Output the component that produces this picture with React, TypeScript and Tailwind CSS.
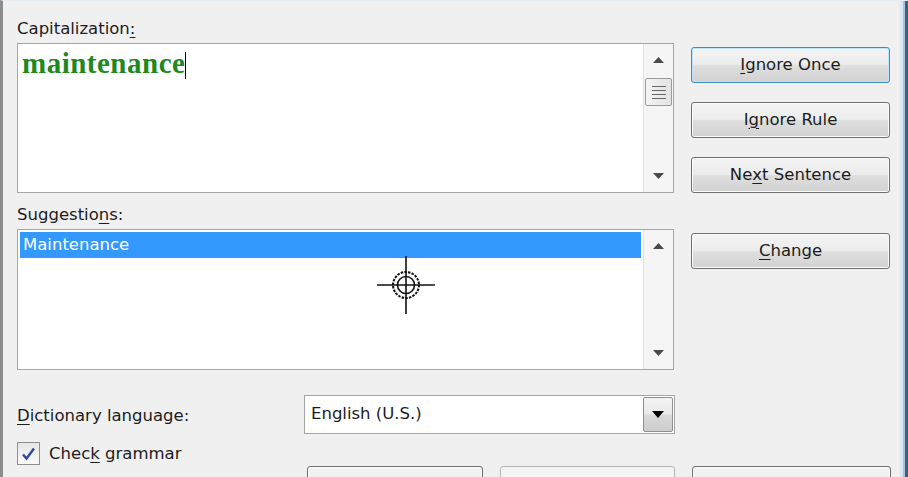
import React from 'react';

const ui = { fontFamily: '"DejaVu Sans", Tahoma, sans-serif' };

// access-key underline
const K: React.FC<{ children: React.ReactNode }> = ({ children }) => (
  <span className="underline underline-offset-[3px] decoration-1">{children}</span>
);

type BtnProps = {
  children?: React.ReactNode;
  className?: string;
  focused?: boolean;
  disabled?: boolean;
};

const VistaButton: React.FC<BtnProps> = ({ children, className = '', focused, disabled }) => (
  <div
    className={
      'relative flex items-center justify-center rounded-[3px] border text-[16.5px] ' +
      (focused
        ? 'border-[#3c8fc6] shadow-[inset_0_0_0_1px_#bfe3f7] '
        : disabled
          ? 'border-[#b5b5b5] '
          : 'border-[#707070] shadow-[inset_0_0_0_1px_#fbfbfb] ') +
      (disabled
        ? 'bg-[#f4f4f4] text-[#a0a0a0] '
        : 'bg-[linear-gradient(to_bottom,#f4f4f4_0%,#ececec_48%,#dedede_52%,#d2d2d2_100%)] text-[#1c1c1c] ') +
      className
    }
    style={ui}
  >
    {children}
  </div>
);

const ArrowUp = () => (
  <svg width="11" height="6" viewBox="0 0 11 6">
    <path d="M0 6 L5.5 0 L11 6 Z" fill="#4a4a4a" />
  </svg>
);

const ArrowDown = () => (
  <svg width="11" height="6" viewBox="0 0 11 6">
    <path d="M0 0 L11 0 L5.5 6 Z" fill="#4a4a4a" />
  </svg>
);

const ScrollBar: React.FC<{ thumb?: boolean }> = ({ thumb }) => (
  <div className="w-[30px] h-full border-l border-[#e3e3e3] bg-[#f5f5f5] flex flex-col items-center">
    <div className="h-[32px] flex items-center justify-center">
      <ArrowUp />
    </div>
    {thumb && (
      <div className="w-[27px] h-[28px] mt-[2px] rounded-[2px] border border-[#9a9a9a] bg-[linear-gradient(to_right,#f4f4f4,#e2e2e2)] flex flex-col items-center justify-center gap-[3px]">
        <div className="w-[14px] h-[1px] bg-[#666]" />
        <div className="w-[14px] h-[1px] bg-[#666]" />
        <div className="w-[14px] h-[1px] bg-[#666]" />
        <div className="w-[14px] h-[1px] bg-[#666]" />
      </div>
    )}
    <div className="flex-1" />
    <div className="h-[32px] flex items-center justify-center">
      <ArrowDown />
    </div>
  </div>
);

const Crosshair = () => (
  <svg width="58" height="58" viewBox="0 0 58 58">
    <circle cx="29" cy="29" r="13" fill="none" stroke="#111" strokeWidth="2" strokeDasharray="2.5 1.2" />
    <circle cx="29" cy="29" r="8.5" fill="none" stroke="#111" strokeWidth="1.6" />
    <path d="M0 29 H58 M29 0 V58" stroke="#111" strokeWidth="1.6" />
  </svg>
);

const App: React.FC = () => {
  return (
    <div
      className="w-[908px] h-[477px] overflow-hidden bg-[#f0f0f0] border-l-[3px] border-l-[#8c8c8c] border-t border-t-[#e6edf3] flex text-[#1c1c1c]"
      style={ui}
    >
      <div className="flex-1 pl-[14px] flex flex-col">
        {/* grammar issue */}
        <div className="flex">
          <div className="w-[657px] flex flex-col">
            <div className="h-[42px] pt-[18px] text-[16.5px] leading-[20px]">
              Capitalization<K>:</K>
            </div>
            <div className="h-[150px] border border-[#a5a5a5] bg-white flex">
              <div className="flex-1 pl-[4px] pt-[3px]">
                <span
                  className="text-[29px] font-bold text-[#1f881f] leading-[32px] tracking-[0.5px]"
                  style={{ fontFamily: '"Liberation Serif", "Times New Roman", serif' }}
                >
                  maintenance
                </span>
                <span className="inline-block w-[1px] h-[27px] bg-black align-[-6px]" />
              </div>
              <ScrollBar thumb />
            </div>
          </div>
          <div className="ml-[17px] pt-[46px] flex flex-col gap-[19px]">
            <VistaButton focused className="w-[199px] h-[36px]">
              <K>I</K>gnore Once
            </VistaButton>
            <VistaButton className="w-[199px] h-[36px]">
              I<K>g</K>nore Rule
            </VistaButton>
            <VistaButton className="w-[199px] h-[36px]">
              Ne<K>x</K>t Sentence
            </VistaButton>
          </div>
        </div>

        {/* suggestions */}
        <div className="flex">
          <div className="w-[657px] flex flex-col">
            <div className="h-[36px] pt-[12px] text-[16.5px] leading-[20px]">
              Suggestio<K>n</K>s:
            </div>
            <div className="h-[141px] border border-[#a5a5a5] bg-white flex">
              <div className="relative flex-1 p-[2px]">
                <div className="h-[26px] bg-[#3399ff] text-white text-[16.5px] leading-[26px] pl-[3px]">
                  Maintenance
                </div>
                <div className="absolute left-[359px] top-[26px]">
                  <Crosshair />
                </div>
              </div>
              <ScrollBar />
            </div>
          </div>
          <div className="ml-[17px] pt-[40px]">
            <VistaButton className="w-[199px] h-[36px]">
              <K>C</K>hange
            </VistaButton>
          </div>
        </div>

        {/* dictionary language */}
        <div className="h-[39px] mt-[25px] flex items-center">
          <div className="w-[287px] text-[16.5px] leading-[20px] pt-[3px]">
            <K>D</K>ictionary language:
          </div>
          <div className="w-[371px] h-[39px] border border-[#a5a5a5] bg-white flex items-center">
            <div className="flex-1 pl-[6px] text-[16.5px]">English (U.S.)</div>
            <div className="w-[30px] h-[35px] mr-[1px] rounded-[2px] border border-[#8e8e8e] bg-[linear-gradient(to_bottom,#f4f4f4_0%,#e9e9e9_48%,#d9d9d9_52%,#cdcdcd_100%)] flex items-center justify-center">
              <svg width="12" height="7" viewBox="0 0 12 7">
                <path d="M0 0 H12 L6 7 Z" fill="#000" />
              </svg>
            </div>
          </div>
        </div>

        {/* check grammar + bottom buttons */}
        <div className="mt-[8px] flex items-start">
          <div className="w-[290px] flex items-center gap-[9px] h-[23px]">
            <div className="w-[23px] h-[23px] border border-[#8f8f8f] bg-[linear-gradient(to_bottom,#e6e6e6,#fafafa)] flex items-center justify-center">
              <svg width="15" height="14" viewBox="0 0 15 14">
                <path d="M2 7.5 L5.5 11.5 L13 1.5" fill="none" stroke="#2b4c9c" strokeWidth="2.4" />
              </svg>
            </div>
            <span className="text-[16.5px] leading-[20px]">
              Chec<K>k</K> grammar
            </span>
          </div>
          <div className="flex gap-[17px] mt-[24px]">
            <VistaButton className="w-[176px] h-[36px]">Options...</VistaButton>
            <VistaButton disabled className="w-[175px] h-[36px]">
              Undo
            </VistaButton>
            <VistaButton className="w-[199px] h-[36px]">Cancel</VistaButton>
          </div>
        </div>
      </div>

      {/* window frame, right edge */}
      <div className="w-[3px] h-full bg-[#dbe7f2]" />
      <div className="w-[2px] h-full bg-[#a9c3dc]" />
      <div className="w-[3px] h-full bg-[#3e5f80]" />
    </div>
  );
};

export default App;
